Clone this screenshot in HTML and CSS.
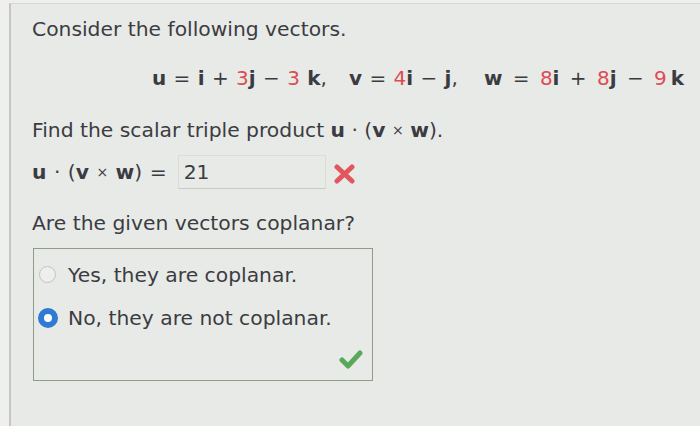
FILE: index.html
```html
<!DOCTYPE html>
<html>
<head>
<meta charset="utf-8">
<link rel="stylesheet" href="styles.css">
</head>
<body>
<div class="frame">
  <p class="line first">Consider the following vectors.</p>
  <p class="line vectors"><b>u</b> = <b>i</b> + <span class="num">3</span><b>j</b> − <span class="num">3</span> <b>k</b>,&nbsp;&nbsp; <b>v</b> = <span class="num">4</span><b>i</b> − <b>j</b>,&nbsp;&nbsp; <span class="wpart"><b>w</b> = <span class="num">8</span><b>i</b> + <span class="num">8</span><b>j</b> − <span class="num">9</span><span class="thin"></span><b>k</b></span></p>
  <p class="line find">Find the scalar triple product <b>u</b> · (<b>v</b> <span class="times">×</span> <b>w</b>).</p>
  <div class="answer">
    <span class="label"><b>u</b> · (<b>v</b> <span class="times">×</span> <b>w</b>) =</span>
    <span class="input">21</span>
    <svg class="wrong" width="23" height="20" viewBox="0 0 23 20"><path d="M4 3 L19 17 M19 3 L4 17" stroke="#e1575d" stroke-width="5" stroke-linecap="round"/></svg>
  </div>
  <p class="line question">Are the given vectors coplanar?</p>
  <div class="choices">
    <div class="choice"><span class="radio"></span><span>Yes, they are coplanar.</span></div>
    <div class="choice"><span class="radio on"></span><span>No, they are not coplanar.</span></div>
    <div class="mark">
      <svg width="24" height="20" viewBox="0 0 24 20"><path d="M3 11 L9 17 L21 4" fill="none" stroke="#5aa85c" stroke-width="5" stroke-linecap="round" stroke-linejoin="round"/></svg>
    </div>
  </div>
</div>
</body>
</html>
```

FILE: styles.css
```css
html, body {
  margin: 0;
  padding: 0;
}
body {
  background: #eff0ee;
  width: 700px;
  height: 426px;
  overflow: hidden;
  font-family: "DejaVu Sans", Verdana, sans-serif;
  color: #3b3c42;
}
.frame {
  margin: 3px 0 0 9px;
  border-left: 2px solid #c4c6c2;
  border-top: 1px solid #d6d8d4;
  background: #e8eae7;
  padding: 13px 0 0 21px;
  height: 430px;
  box-sizing: border-box;
}
.line {
  margin: 0;
  font-size: 20.3px;
  line-height: 24px;
  white-space: nowrap;
}
.vectors {
  margin-top: 25px;
  padding-left: 120px;
  font-size: 20px;
  word-spacing: 1px;
}
.wpart {
  margin-left: 4px;
  word-spacing: 4px;
}
.thin {
  display: inline-block;
  width: 4px;
}
.num {
  color: #dc4c55;
}
.find {
  margin-top: 28px;
}
.times {
  font-size: 14px;
  vertical-align: 2px;
}
.answer {
  margin-top: 13px;
  display: flex;
  align-items: center;
  height: 34px;
  font-size: 20.3px;
  line-height: 24px;
}
.label {
  white-space: nowrap;
  word-spacing: 1px;
}
.input {
  margin-left: 11px;
  width: 148px;
  height: 34px;
  box-sizing: border-box;
  border: 1px solid #dcddd9;
  border-bottom-color: #c9cac6;
  padding: 4px 0 0 5px;
  color: #3b3c42;
}
.wrong {
  margin-left: 7px;
  margin-top: 4px;
}
.question {
  margin-top: 22px;
}
.choices {
  margin: 13px 0 0 1px;
  width: 340px;
  height: 133px;
  box-sizing: border-box;
  border: 1px solid #8f9d88;
  padding: 14px 0 0 5px;
}
.choice {
  display: flex;
  align-items: center;
  height: 24px;
  font-size: 20.3px;
  line-height: 24px;
  margin-bottom: 19px;
  white-space: nowrap;
}
.radio {
  width: 17px;
  height: 17px;
  box-sizing: border-box;
  border-radius: 50%;
  border: 1.5px solid #c2c3c0;
  background: #eeefec;
  margin-right: 12px;
  margin-top: -2px;
}
.radio.on {
  width: 20px;
  height: 20px;
  margin-left: -1px;
  margin-right: 10px;
  margin-top: 0;
  border: 6.5px solid #2f7ad3;
  background: #ffffff;
}
.mark {
  display: flex;
  justify-content: flex-end;
  margin: 2px 9px 0 0;
}
```
